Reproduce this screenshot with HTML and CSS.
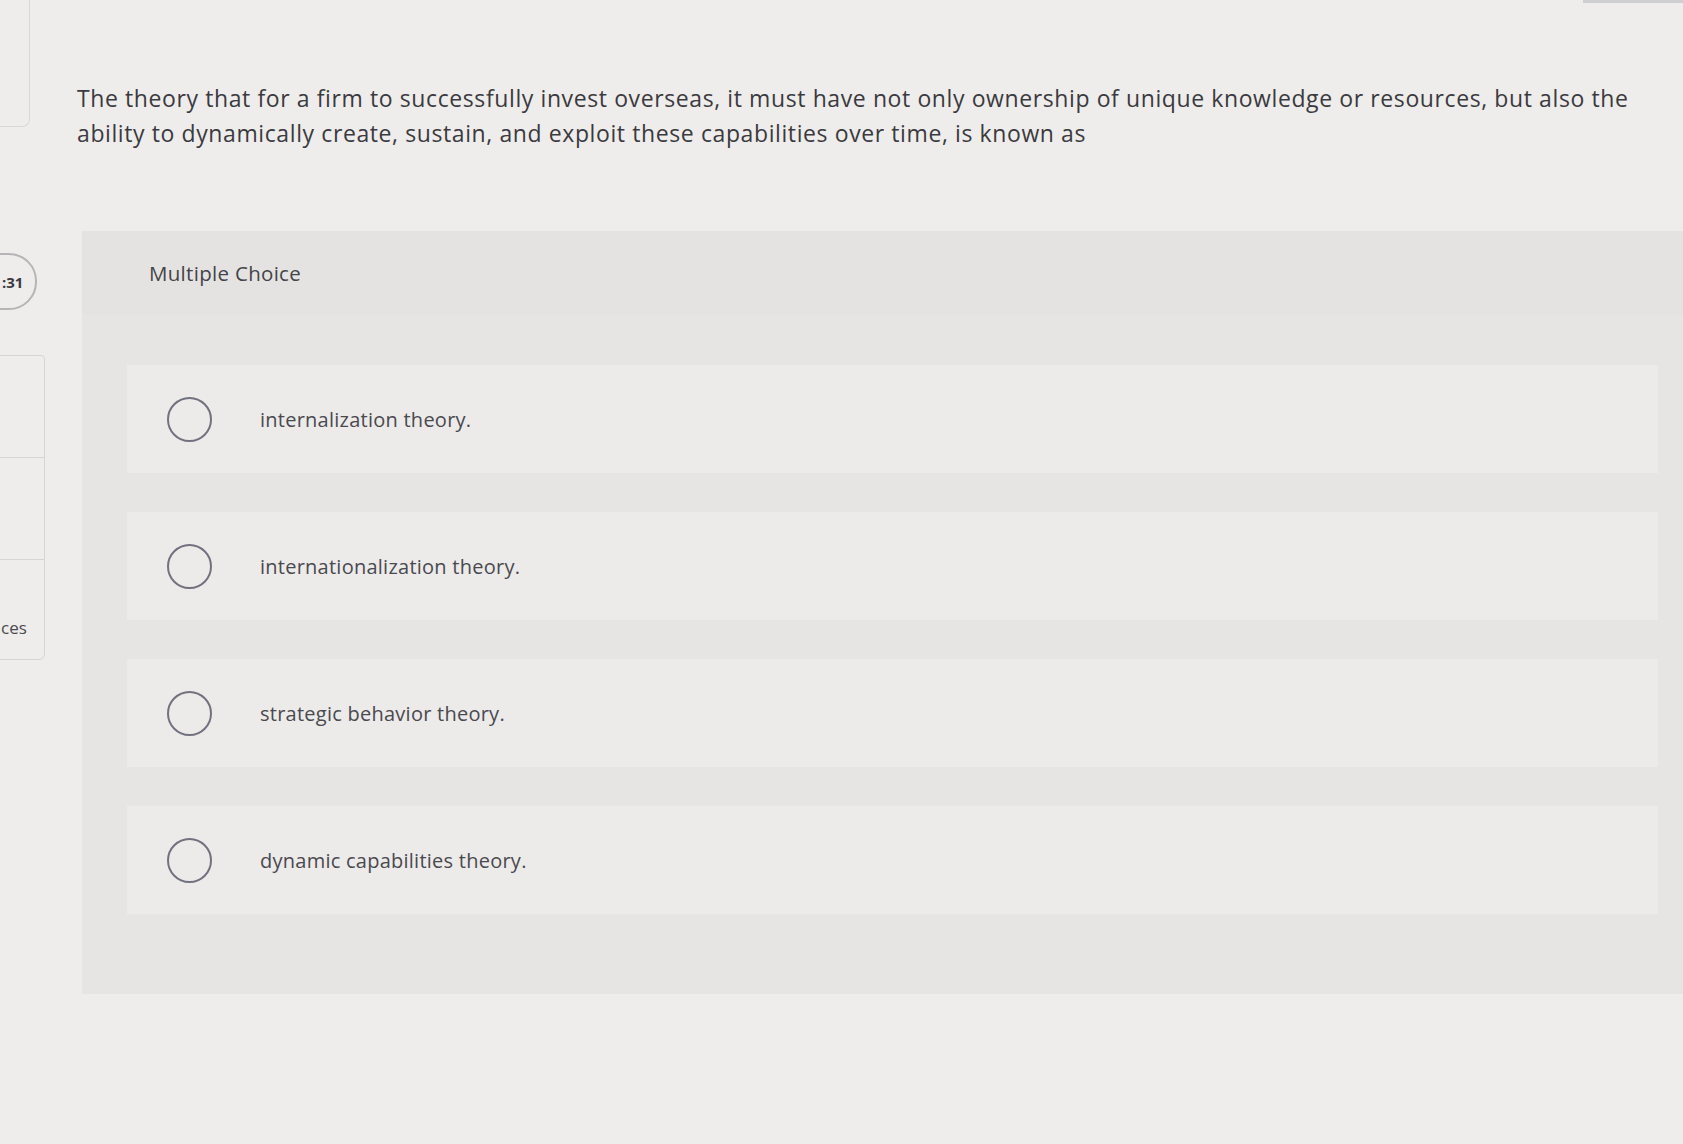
FILE: index.html
```html
<!DOCTYPE html>
<html lang="en">
<head>
<meta charset="utf-8">
<title>Multiple Choice</title>
<link rel="stylesheet" href="styles.css">
</head>
<body>
<div class="page">
  <aside class="side">
    <div class="side-top"></div>
    <div class="side-timer">:31</div>
    <div class="side-box">
      <div class="side-cell"></div>
      <div class="side-cell"></div>
      <div class="side-cell side-last">ces</div>
    </div>
  </aside>
  <main class="main">
    <div class="top-strip"><span class="top-bar"></span></div>
    <p class="question">The theory that for a firm to successfully invest overseas, it must have not only ownership of unique knowledge or resources, but also the ability to dynamically create, sustain, and exploit these capabilities over time, is known as</p>
    <section class="panel">
      <div class="panel-head">Multiple Choice</div>
      <div class="options">
        <div class="option"><span class="radio"></span><span class="label">internalization theory.</span></div>
        <div class="option"><span class="radio"></span><span class="label">internationalization theory.</span></div>
        <div class="option"><span class="radio"></span><span class="label">strategic behavior theory.</span></div>
        <div class="option"><span class="radio"></span><span class="label">dynamic capabilities theory.</span></div>
      </div>
    </section>
  </main>
</div>
</body>
</html>
```

FILE: styles.css
```css
* { box-sizing: border-box; }
html, body {
  margin: 0;
  padding: 0;
  background: #eeedeb;
  font-family: "Open Sans", Lato, "Liberation Sans", sans-serif;
  color: #3d3c42;
  overflow: hidden;
}
.page {
  display: flex;
  width: 1683px;
  height: 1144px;
}
.side {
  width: 45px;
  flex: 0 0 45px;
  display: flex;
  flex-direction: column;
}
.side-top {
  margin-left: -20px;
  width: 50px;
  height: 127px;
  border: 1px solid #d9d8d6;
  border-top: none;
  border-radius: 0 0 8px 0;
}
.side-timer {
  margin-top: 126px;
  margin-left: -30px;
  width: 67px;
  height: 57px;
  border: 2px solid #b5b4b6;
  border-radius: 0 28px 28px 0;
  display: flex;
  align-items: center;
  padding-left: 30px;
  font-size: 15px;
  font-weight: 700;
  color: #3a3a40;
}
.side-box {
  margin-top: 45px;
  margin-left: -20px;
  width: 65px;
  height: 305px;
  border: 1px solid #d6d5d3;
  border-radius: 0 4px 6px 0;
  display: flex;
  flex-direction: column;
}
.side-cell {
  height: 102px;
  border-bottom: 1px solid #d6d5d3;
}
.side-last {
  border-bottom: none;
  flex: 1;
  display: flex;
  align-items: flex-end;
  padding: 0 0 20px 20px;
  font-size: 17px;
  color: #4a4a50;
}
.main {
  flex: 1;
  display: flex;
  flex-direction: column;
}
.top-strip {
  display: flex;
  justify-content: flex-end;
  height: 3px;
}
.top-bar {
  width: 100px;
  height: 3px;
  background: #cfcfd1;
}
.question {
  margin: 78px 25px 0 32px;
  font-size: 23px;
  letter-spacing: 0.6px;
  line-height: 35px;
  color: #3b3a40;
}
.panel {
  margin: 80px 0 0 37px;
  background: #e6e5e3;
  padding-bottom: 80px;
}
.panel-head {
  height: 84px;
  display: flex;
  align-items: center;
  padding-left: 67px;
  font-size: 20.5px;
  letter-spacing: 0.3px;
  color: #45444a;
  background: #e4e3e1;
}
.options {
  display: flex;
  flex-direction: column;
  gap: 39px;
  padding: 50px 25px 0 45px;
}
.option {
  height: 108px;
  background: #ecebe9;
  display: flex;
  align-items: center;
  padding-left: 40px;
}
.radio {
  width: 45px;
  height: 45px;
  border: 2px solid #72717f;
  border-radius: 50%;
  flex: 0 0 45px;
}
.label {
  margin-left: 48px;
  font-size: 20px;
  letter-spacing: 0.25px;
  color: #4a4950;
}
```
